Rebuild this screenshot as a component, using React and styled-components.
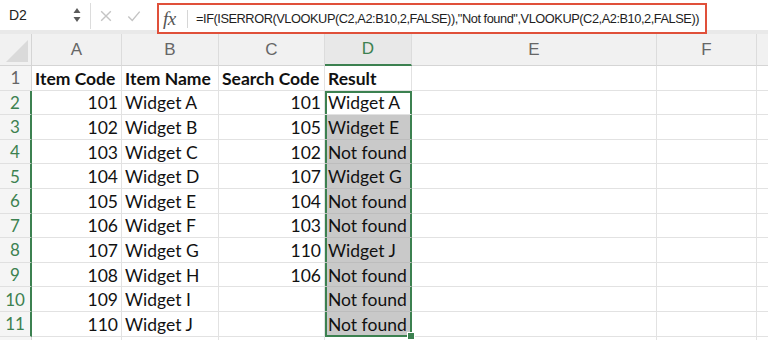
import React from "react";
import styled, { createGlobalStyle, css } from "styled-components";

const GREEN = "#3c8150";
const GRID = "#e2e2e2";
const CELL_FONT = `"Lato", "Open Sans", sans-serif`;

const GlobalStyle = createGlobalStyle`
  html, body {
    margin: 0;
    padding: 0;
    background: #ffffff;
    overflow: hidden;
  }
  body {
    width: 768px;
    height: 340px;
  }
`;

const columns = ["A", "B", "C", "D", "E", "F", ""];
const widths = "32px 90px 97px 106px 87px 245px 100px 40px";

const rows = [
  [101, "Widget A", 101, "Widget A"],
  [102, "Widget B", 105, "Widget E"],
  [103, "Widget C", 102, "Not found"],
  [104, "Widget D", 107, "Widget G"],
  [105, "Widget E", 104, "Not found"],
  [106, "Widget F", 103, "Not found"],
  [107, "Widget G", 110, "Widget J"],
  [108, "Widget H", 106, "Not found"],
  [109, "Widget I", "", "Not found"],
  [110, "Widget J", "", "Not found"],
];

function App() {
  return (
    <Page>
      <GlobalStyle />
      <Toolbar>
        <NameBox>
          <span>D2</span>
          <Spinner viewBox="0 0 8 16">
            <path d="M4 1 L7.5 6 L0.5 6 Z" fill="#5a5a5a" />
            <path d="M4 15 L7.5 10 L0.5 10 Z" fill="#5a5a5a" />
          </Spinner>
        </NameBox>
        <Divider />
        <ToolIcon viewBox="0 0 16 16" $gap={8}>
          <path d="M2.5 2.5 L13.5 13.5 M13.5 2.5 L2.5 13.5" stroke="#c4c4c4" strokeWidth="1.6" fill="none" />
        </ToolIcon>
        <ToolIcon viewBox="0 0 16 16" $gap={14}>
          <path d="M1.5 8.5 L6 13 L14.5 3" stroke="#c4c4c4" strokeWidth="1.6" fill="none" />
        </ToolIcon>
        <FormulaBox>
          <Fx>fx</Fx>
          <FxDivider />
          <FormulaText>
            =IF(ISERROR(VLOOKUP(C2,A2:B10,2,FALSE)),"Not found",VLOOKUP(C2,A2:B10,2,FALSE))
          </FormulaText>
        </FormulaBox>
      </Toolbar>

      <Sheet>
        <Corner>
          <svg width="22" height="22" viewBox="0 0 22 22">
            <path d="M22 0 L22 22 L0 22 Z" fill="#dadada" />
          </svg>
        </Corner>
        {columns.map((c, i) => (
          <ColHead key={i} $active={c === "D"}>{c}</ColHead>
        ))}

        <RowHead>1</RowHead>
        <Cell $bold>Item Code</Cell>
        <Cell $bold>Item Name</Cell>
        <Cell $bold>Search Code</Cell>
        <Cell $bold>Result</Cell>
        <Cell />
        <Cell />
        <Cell />

        {rows.map((r, i) => {
          const n = i + 2;
          const first = i === 0;
          const last = i === rows.length - 1;
          return (
            <React.Fragment key={n}>
              <RowHead $active>{n}</RowHead>
              <Cell $num>{r[0]}</Cell>
              <Cell>{r[1]}</Cell>
              <Cell $num>{r[2]}</Cell>
              <Cell $sel $first={first} $last={last} $current={first}>
                {r[3]}
                {last && <FillHandle />}
              </Cell>
              <Cell />
              <Cell />
              <Cell />
            </React.Fragment>
          );
        })}

        <RowHead />
        <Cell />
        <Cell />
        <Cell />
        <Cell />
        <Cell />
        <Cell />
        <Cell />
      </Sheet>
    </Page>
  );
}

const Page = styled.div`
  width: 768px;
  height: 340px;
  overflow: hidden;
  background: #ffffff;
`;

const Toolbar = styled.div`
  height: 34px;
  display: flex;
  align-items: flex-start;
  background: linear-gradient(#ffffff 0 30px, #e9e9e9 30px 34px);
  box-sizing: border-box;
`;

const NameBox = styled.div`
  width: 90px;
  height: 30px;
  display: flex;
  align-items: center;
  justify-content: space-between;
  padding: 0 9px 0 9px;
  box-sizing: border-box;
  font-family: "Liberation Sans", Arial, sans-serif;
  font-size: 14px;
  color: #222;
`;

const Spinner = styled.svg`
  width: 8px;
  height: 16px;
`;

const Divider = styled.div`
  width: 1px;
  height: 26px;
  margin-top: 3px;
  background: #dcdcdc;
`;

const ToolIcon = styled.svg`
  width: 14px;
  height: 14px;
  margin: 9px 0 0 ${(p) => p.$gap}px;
`;

const FormulaBox = styled.div`
  margin: 3px 0 0 16px;
  width: 550px;
  height: 31px;
  border: 2px solid #e0503a;
  box-sizing: border-box;
  background: #ffffff;
  display: flex;
  align-items: center;
`;

const Fx = styled.span`
  font-family: "Liberation Serif", "Times New Roman", serif;
  font-style: italic;
  font-size: 19px;
  color: #555;
  margin-left: 4px;
  width: 16px;
  letter-spacing: -0.5px;
`;

const FxDivider = styled.div`
  width: 1px;
  height: 18px;
  background: #d6d6d6;
  margin: 0 8px 0 8px;
`;

const FormulaText = styled.span`
  font-family: "Liberation Sans", Arial, sans-serif;
  font-size: 12.8px;
  color: #1e1e1e;
  white-space: nowrap;
  letter-spacing: -0.45px;
`;

const Sheet = styled.div`
  display: grid;
  grid-template-columns: ${widths};
  grid-template-rows: 32px repeat(12, 24.6px);
`;

const headBase = css`
  background: #f1f1f1;
  color: #666;
  font-family: "Liberation Sans", Arial, sans-serif;
  font-size: 17px;
  display: flex;
  align-items: center;
  justify-content: center;
  box-sizing: border-box;
`;

const Corner = styled.div`
  ${headBase};
  align-items: flex-end;
  justify-content: flex-end;
  padding: 0 3px 3px 0;
  border-right: 1px solid #d5d5d5;
  border-bottom: 1px solid #d5d5d5;
`;

const ColHead = styled.div`
  ${headBase};
  border-right: 1px solid #dcdcdc;
  border-bottom: ${(p) => (p.$active ? `2px solid ${GREEN}` : "1px solid #d5d5d5")};
  color: ${(p) => (p.$active ? GREEN : "#666")};
  background: ${(p) => (p.$active ? "#e8e8e8" : "#f1f1f1")};
`;

const RowHead = styled.div`
  ${headBase};
  font-family: ${CELL_FONT};
  font-size: 17px;
  background: #f5f5f5;
  color: ${(p) => (p.$active ? GREEN : "#666")};
  border-bottom: 1px solid #e0e0e0;
  border-right: ${(p) => (p.$active ? `2px solid ${GREEN}` : "1px solid #d5d5d5")};
`;

const Cell = styled.div`
  position: relative;
  display: flex;
  align-items: center;
  justify-content: ${(p) => (p.$num ? "flex-end" : "flex-start")};
  padding: 1px 3px 0 3px;
  box-sizing: border-box;
  font-family: ${CELL_FONT};
  font-size: 17.5px;
  font-weight: ${(p) => (p.$bold ? 700 : 400)};
  color: #111;
  white-space: nowrap;
  overflow: visible;
  border-right: 1px solid ${GRID};
  border-bottom: 1px solid ${GRID};
  ${(p) =>
    p.$sel &&
    css`
      background: ${p.$current ? "#ffffff" : "#c9c9c9"};
      border-bottom-color: ${p.$current ? GRID : "#bdbdbd"};
      border-right-color: ${GREEN};
      box-shadow: inset 2px 0 0 ${GREEN}, inset -1px 0 0 ${GREEN}
        ${p.$first ? `, inset 0 2px 0 ${GREEN}` : ""}
        ${p.$last ? `, inset 0 -1px 0 ${GREEN}` : ""};
      ${p.$last && `border-bottom-color: ${GREEN};`}
    `}
`;

const FillHandle = styled.span`
  position: absolute;
  right: -4px;
  bottom: -4px;
  width: 6px;
  height: 6px;
  background: ${GREEN};
  border: 1px solid #ffffff;
  z-index: 2;
`;

export default App;
